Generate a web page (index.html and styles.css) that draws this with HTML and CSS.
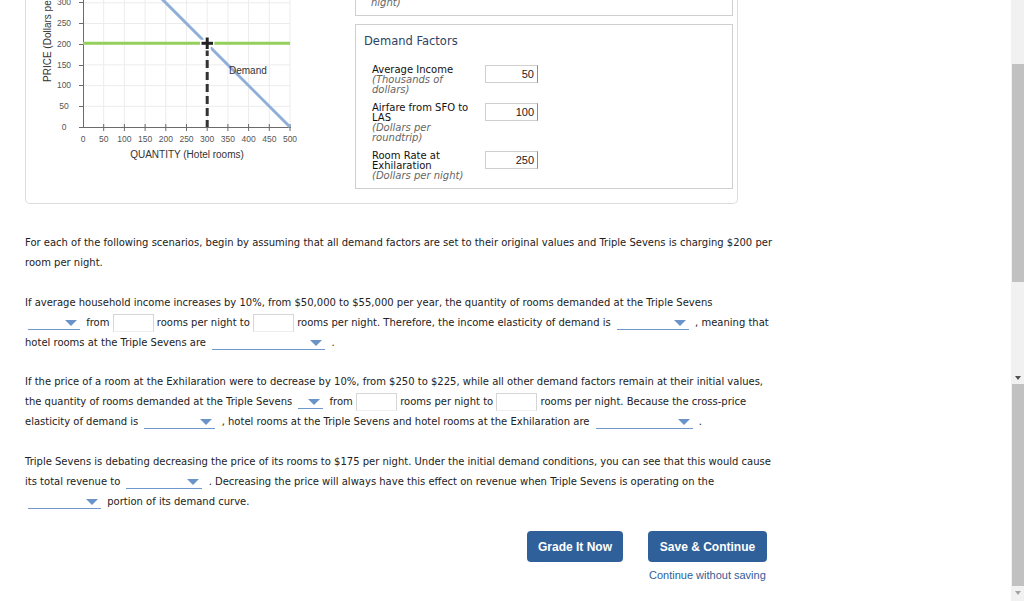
FILE: index.html
```html
<!DOCTYPE html>
<html lang="en">
<head>
<meta charset="utf-8">
<title>Triple Sevens demand</title>
<link rel="stylesheet" href="styles.css">
</head>
<body>
<div class="main">
  <div class="page">
    <div class="panel">
      <svg class="chart" width="329" height="170" viewBox="26 0 329 170" xmlns="http://www.w3.org/2000/svg">
        <g class="grid" stroke="#ececec" stroke-width="1">
          <line x1="103.7" y1="-90" x2="103.7" y2="127"/>
          <line x1="124.4" y1="-90" x2="124.4" y2="127"/>
          <line x1="145.1" y1="-90" x2="145.1" y2="127"/>
          <line x1="165.8" y1="-90" x2="165.8" y2="127"/>
          <line x1="186.5" y1="-90" x2="186.5" y2="127"/>
          <line x1="207.2" y1="-90" x2="207.2" y2="127"/>
          <line x1="227.9" y1="-90" x2="227.9" y2="127"/>
          <line x1="248.6" y1="-90" x2="248.6" y2="127"/>
          <line x1="269.3" y1="-90" x2="269.3" y2="127"/>
          <line x1="290" y1="-90" x2="290" y2="127"/>
          <line x1="83" y1="106.3" x2="290" y2="106.3"/>
          <line x1="83" y1="85.6" x2="290" y2="85.6"/>
          <line x1="83" y1="64.9" x2="290" y2="64.9"/>
          <line x1="83" y1="44.2" x2="290" y2="44.2"/>
          <line x1="83" y1="23.5" x2="290" y2="23.5"/>
          <line x1="83" y1="2.8" x2="290" y2="2.8"/>
        </g>
        <g class="axis" stroke="#6b6b6b" stroke-width="1">
          <line x1="83.5" y1="-90" x2="83.5" y2="127.5"/>
          <line x1="83" y1="127.5" x2="291" y2="127.5"/>
          <line x1="79" y1="127.5" x2="83" y2="127.5"/>
          <line x1="79" y1="106.5" x2="83" y2="106.5"/>
          <line x1="79" y1="85.5" x2="83" y2="85.5"/>
          <line x1="79" y1="65.5" x2="83" y2="65.5"/>
          <line x1="79" y1="44.5" x2="83" y2="44.5"/>
          <line x1="79" y1="23.5" x2="83" y2="23.5"/>
          <line x1="79" y1="2.5" x2="83" y2="2.5"/>
          <line x1="103.7" y1="124" x2="103.7" y2="131"/>
          <line x1="124.4" y1="124" x2="124.4" y2="131"/>
          <line x1="145.1" y1="124" x2="145.1" y2="131"/>
          <line x1="165.8" y1="124" x2="165.8" y2="131"/>
          <line x1="186.5" y1="124" x2="186.5" y2="131"/>
          <line x1="207.2" y1="124" x2="207.2" y2="131"/>
          <line x1="227.9" y1="124" x2="227.9" y2="131"/>
          <line x1="248.6" y1="124" x2="248.6" y2="131"/>
          <line x1="269.3" y1="124" x2="269.3" y2="131"/>
          <line x1="290" y1="124" x2="290" y2="131"/>
        </g>
        <g class="ticklabels" text-anchor="middle">
          <text x="64" y="130">0</text>
          <text x="64" y="109">50</text>
          <text x="64" y="88">100</text>
          <text x="64" y="68">150</text>
          <text x="64" y="47">200</text>
          <text x="64" y="26">250</text>
          <text x="64" y="5">300</text>
          <text x="83" y="142">0</text>
          <text x="103.7" y="142">50</text>
          <text x="124.4" y="142">100</text>
          <text x="145.1" y="142">150</text>
          <text x="165.8" y="142">200</text>
          <text x="186.5" y="142">250</text>
          <text x="207.2" y="142">300</text>
          <text x="227.9" y="142">350</text>
          <text x="248.6" y="142">400</text>
          <text x="269.3" y="142">450</text>
          <text x="290" y="142">500</text>
        </g>
        <text class="axistitle" x="187" y="158" text-anchor="middle">QUANTITY (Hotel rooms)</text>
        <text class="axistitle" transform="translate(51,82) rotate(-90)" x="0" y="0">PRICE (Dollars per night)</text>
        <line x1="83" y1="43.3" x2="290" y2="43.3" stroke="#94d05c" stroke-width="3"/>
        <line x1="83" y1="-80" x2="290" y2="127" stroke="#8fafd9" stroke-width="3"/>
        <line x1="207.2" y1="48" x2="207.2" y2="127" stroke="#333" stroke-width="3" stroke-dasharray="8 4"/>
        <g stroke="#fff" stroke-width="7">
          <line x1="200" y1="43.3" x2="214.4" y2="43.3"/>
          <line x1="207.2" y1="36" x2="207.2" y2="50.5"/>
        </g>
        <g stroke="#222" stroke-width="3">
          <line x1="201.5" y1="43.3" x2="213" y2="43.3"/>
          <line x1="207.2" y1="37.5" x2="207.2" y2="49"/>
        </g>
        <text class="axistitle" x="229" y="74">Demand</text>
      </svg>
      <div class="side">
        <div class="box topbox"><span class="sub">night)</span></div>
        <div class="box factors">
          <div class="factors-title">Demand Factors</div>
          <div class="frow">
            <div class="flabel">Average Income <span class="sub">(Thousands of dollars)</span></div>
            <div class="fval">50</div>
          </div>
          <div class="frow">
            <div class="flabel">Airfare from SFO to LAS <span class="sub">(Dollars per roundtrip)</span></div>
            <div class="fval">100</div>
          </div>
          <div class="frow">
            <div class="flabel">Room Rate at Exhilaration <span class="sub">(Dollars per night)</span></div>
            <div class="fval">250</div>
          </div>
        </div>
      </div>
    </div>

    <div class="questions">
      <p>For each of the following scenarios, begin by assuming that all demand factors are set to their original values and Triple Sevens is charging $200 per room per night.</p>
      <p>If average household income increases by 10%, from $50,000 to $55,000 per year, the quantity of rooms demanded at the Triple Sevens <span class="dd w52"></span> from <span class="blank"></span> rooms per night to <span class="blank"></span> rooms per night. Therefore, the income elasticity of demand is <span class="dd w72"></span> , meaning that hotel rooms at the Triple Sevens are <span class="dd w113"></span> .</p>
      <p>If the price of a room at the Exhilaration were to decrease by 10%, from $250 to $225, while all other demand factors remain at their initial values, the quantity of rooms demanded at the Triple Sevens <span class="dd w25"></span> from <span class="blank"></span> rooms per night to <span class="blank"></span> rooms per night. Because the cross-price elasticity of demand is <span class="dd w71"></span> , hotel rooms at the Triple Sevens and hotel rooms at the Exhilaration are <span class="dd w97"></span> .</p>
      <p>Triple Sevens is debating decreasing the price of its rooms to $175 per night. Under the initial demand conditions, you can see that this would cause its total revenue to <span class="dd w76"></span> . Decreasing the price will always have this effect on revenue when Triple Sevens is operating on the <span class="dd w73"></span> portion of its demand curve.</p>
    </div>

    <div class="actions">
      <button class="btn" type="button">Grade It Now</button>
      <div class="savecol">
        <button class="btn save" type="button">Save &amp; Continue</button>
        <a class="skip" href="#">Continue without saving</a>
      </div>
    </div>
  </div>
</div>
<div class="scrollbar">
  <div class="seg seg-a">
    <div class="thumb thumb-a"></div>
    <div class="arrow arrow-dark"></div>
  </div>
  <div class="seg seg-b">
    <div class="thumb thumb-b"></div>
    <div class="arrow arrow-light"></div>
  </div>
</div>
</body>
</html>
```

FILE: styles.css
```css
html, body {
  margin: 0;
  padding: 0;
  background: #fff;
}
body {
  display: flex;
  width: 1024px;
  height: 601px;
  overflow: hidden;
  font-family: "DejaVu Sans", Verdana, sans-serif;
  color: #222;
}
.main {
  flex: 1;
  height: 601px;
  overflow: hidden;
}
.page {
  padding-left: 25px;
  width: 747px;
}

/* top panel */
.panel {
  display: flex;
  width: 711px;
  height: 203px;
  border: 1px solid #dcdcdc;
  border-top: none;
  border-radius: 0 0 5px 5px;
}
.chart {
  display: block;
  flex: none;
}
.chart .ticklabels text {
  font-family: "Liberation Sans", Arial, sans-serif;
  font-size: 8.5px;
  fill: #555;
}
.chart .axistitle {
  font-family: "Liberation Sans", Arial, sans-serif;
  font-size: 10px;
  fill: #333;
}
.side {
  display: flex;
  flex-direction: column;
  width: 378px;
}
.box {
  border: 1px solid #cfcfcf;
  box-sizing: border-box;
}
.topbox {
  height: 16px;
  border-top: none;
  padding-left: 15px;
  overflow: hidden;
}
.topbox .sub {
  display: block;
  margin-top: -2px;
}
.sub {
  display: block;
  font-style: italic;
  color: #666;
  font-size: 10px;
  line-height: 10px;
}
.factors {
  margin-top: 8px;
  height: 165px;
  padding: 9px 8px 0 8px;
}
.factors-title {
  font-size: 11.5px;
  line-height: 14px;
  color: #2b4465;
  margin-bottom: 17px;
}
.frow {
  display: flex;
  align-items: flex-start;
  gap: 8px;
  padding-left: 8px;
  margin-bottom: 8px;
}
.flabel {
  width: 105px;
  font-size: 10px;
  line-height: 10px;
  color: #111;
}
.fval {
  width: 53px;
  height: 18px;
  box-sizing: border-box;
  border: 1px solid #cfcfcf;
  border-right-color: #8c8c8c;
  text-align: right;
  padding-right: 3px;
  font-family: "Liberation Sans", Arial, sans-serif;
  font-size: 11px;
  line-height: 16px;
  color: #222;
}

/* questions */
.questions {
  margin-top: 29px;
}
.questions p {
  margin: 0 0 19.5px 0;
  font-size: 10px;
  line-height: 20px;
}
.dd {
  display: inline-block;
  position: relative;
  height: 13px;
  margin: 0 3px;
  border-bottom: 1px solid #6f98cc;
  vertical-align: -4px;
}
.dd::after {
  content: "";
  position: absolute;
  right: 3px;
  top: 4px;
  border-left: 6px solid transparent;
  border-right: 6px solid transparent;
  border-top: 6px solid #6a93c9;
}
.w25 { width: 25px; }
.w52 { width: 52px; }
.w71 { width: 71px; }
.w72 { width: 72px; }
.w73 { width: 73px; }
.w76 { width: 76px; }
.w97 { width: 97px; }
.w113 { width: 113px; }
.blank {
  display: inline-block;
  width: 41px;
  height: 18px;
  box-sizing: border-box;
  border: 1px solid #d6d6d6;
  border-bottom-color: #eee;
  vertical-align: middle;
}

/* actions */
.actions {
  display: flex;
  justify-content: flex-end;
  gap: 25px;
  width: 746px;
  margin-top: 5px;
}
.btn {
  height: 31px;
  padding: 0 11px;
  border: none;
  border-radius: 4px;
  background: #30609a;
  color: #fff;
  font-family: "Liberation Sans", Arial, sans-serif;
  font-weight: bold;
  font-size: 12px;
  cursor: pointer;
}
.btn.save {
  width: 119px;
  padding: 0;
}
.savecol {
  display: flex;
  flex-direction: column;
  align-items: flex-start;
  width: 123px;
}
.skip {
  margin-top: 7px;
  margin-left: 1px;
  font-family: "Liberation Sans", Arial, sans-serif;
  font-size: 11px;
  color: #30609a;
  text-decoration: none;
}

/* scrollbar */
.scrollbar {
  width: 13px;
  flex: none;
  display: flex;
  flex-direction: column;
  background: #f1f1f1;
}
.seg {
  display: flex;
  flex-direction: column;
  align-items: flex-end;
}
.seg-a {
  height: 383px;
  padding-top: 64px;
  box-sizing: border-box;
}
.seg-b {
  flex: 1;
  padding-top: 1px;
}
.thumb {
  width: 12px;
  background: #c1c1c1;
}
.thumb-a { height: 218px; }
.thumb-b { height: 202px; }
.arrow {
  align-self: center;
  width: 0;
  height: 0;
  border-left: 3px solid transparent;
  border-right: 3px solid transparent;
}
.arrow-dark {
  margin-top: auto;
  margin-bottom: 3px;
  border-top: 4px solid #505050;
}
.arrow-light {
  margin-top: 5px;
  border-top: 4px solid #a3a3a3;
}
```
